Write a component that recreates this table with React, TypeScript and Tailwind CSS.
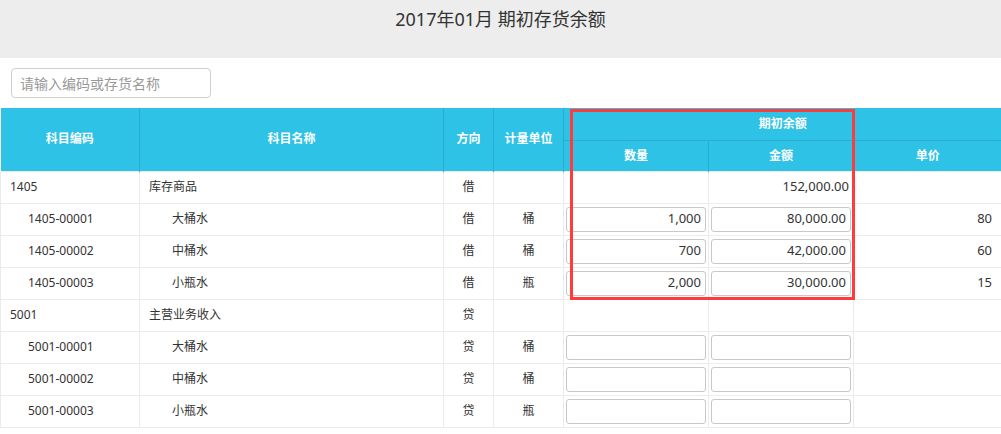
import React from "react";

type Row = {
  code: string;
  name: string;
  dir: string;
  unit: string;
  sub: boolean;
  qty?: string;
  amt?: string;
  price?: string;
  inputs: boolean;
  amtText?: string;
};

const rows: Row[] = [
  { code: "1405", name: "库存商品", dir: "借", unit: "", sub: false, inputs: false, amtText: "152,000.00" },
  { code: "1405-00001", name: "大桶水", dir: "借", unit: "桶", sub: true, inputs: true, qty: "1,000", amt: "80,000.00", price: "80" },
  { code: "1405-00002", name: "中桶水", dir: "借", unit: "桶", sub: true, inputs: true, qty: "700", amt: "42,000.00", price: "60" },
  { code: "1405-00003", name: "小瓶水", dir: "借", unit: "瓶", sub: true, inputs: true, qty: "2,000", amt: "30,000.00", price: "15" },
  { code: "5001", name: "主营业务收入", dir: "贷", unit: "", sub: false, inputs: false },
  { code: "5001-00001", name: "大桶水", dir: "贷", unit: "桶", sub: true, inputs: true, qty: "", amt: "" },
  { code: "5001-00002", name: "中桶水", dir: "贷", unit: "桶", sub: true, inputs: true, qty: "", amt: "" },
  { code: "5001-00003", name: "小瓶水", dir: "贷", unit: "瓶", sub: true, inputs: true, qty: "", amt: "" },
];

function Cell({ children, className = "" }: { children?: React.ReactNode; className?: string }) {
  return (
    <td className={"border border-[#ebebeb] h-[32px] p-0 text-[12px] text-[#333] " + className}>{children}</td>
  );
}

function Box({ value }: { value?: string }) {
  return (
    <div className="mx-[2px] h-[25px] rounded-[3px] border border-[#c8c8c8] bg-white flex items-center justify-end pr-[4px] text-[13px] text-[#333]">
      {value}
    </div>
  );
}

export default function App() {
  const font = { fontFamily: '"Noto Sans", "Noto Sans CJK SC", sans-serif' };
  return (
    <div className="w-[1001px] h-[434px] bg-white overflow-hidden" style={font}>
      <div className="h-[58px] bg-[#ededed] flex justify-center pt-[6px]">
        <h1 className="text-[18px] leading-[26px] text-[#333] font-normal">2017年01月 期初存货余额</h1>
      </div>
      <div className="h-[50px] pt-[10px] pl-[11px]">
        <div className="w-[200px] h-[30px] rounded-[4px] border border-[#cfcfcf] flex items-center pl-[8px] text-[14px] text-[#999]">
          请输入编码或存货名称
        </div>
      </div>
      <div className="relative">
        <table className="w-[1001px] table-fixed border-collapse">
          <colgroup>
            <col className="w-[139px]" />
            <col className="w-[304px]" />
            <col className="w-[50px]" />
            <col className="w-[70px]" />
            <col className="w-[145px]" />
            <col className="w-[145px]" />
            <col className="w-[148px]" />
          </colgroup>
          <thead className="bg-[#2ec2e6] text-white text-[12px] font-bold">
            <tr className="h-[32px]">
              <th rowSpan={2} className="border-r border-[#27aecf] font-bold">科目编码</th>
              <th rowSpan={2} className="border-r border-[#27aecf] font-bold">科目名称</th>
              <th rowSpan={2} className="border-r border-[#27aecf] font-bold">方向</th>
              <th rowSpan={2} className="border-r border-[#27aecf] font-bold">计量单位</th>
              <th colSpan={3} className="border-b border-[#27aecf] font-bold">期初余额</th>
            </tr>
            <tr className="h-[31px]">
              <th className="border-r border-[#27aecf] font-bold">数量</th>
              <th className="border-r border-[#2bb8da] font-bold">金额</th>
              <th className="font-bold">单价</th>
            </tr>
          </thead>
          <tbody>
            {rows.map((r, i) => (
              <tr key={i}>
                <Cell className={r.sub ? "pl-[27px]" : "pl-[9px]"}>{r.code}</Cell>
                <Cell className={r.sub ? "pl-[32px]" : "pl-[9px]"}>{r.name}</Cell>
                <Cell className="text-center">{r.dir}</Cell>
                <Cell className="text-center">{r.unit}</Cell>
                <Cell>{r.inputs ? <Box value={r.qty} /> : null}</Cell>
                <Cell className={r.inputs ? "" : "text-right pr-[4px]"}>
                  {r.inputs ? <Box value={r.amt} /> : <span className="text-[13px]">{r.amtText}</span>}
                </Cell>
                <Cell className="text-right pr-[9px] text-[13px]">{r.price}</Cell>
              </tr>
            ))}
          </tbody>
        </table>
        <div className="absolute left-[570px] top-[1px] w-[285px] h-[191px] border-[3px] border-[#ff3b3b]" />
      </div>
    </div>
  );
}
